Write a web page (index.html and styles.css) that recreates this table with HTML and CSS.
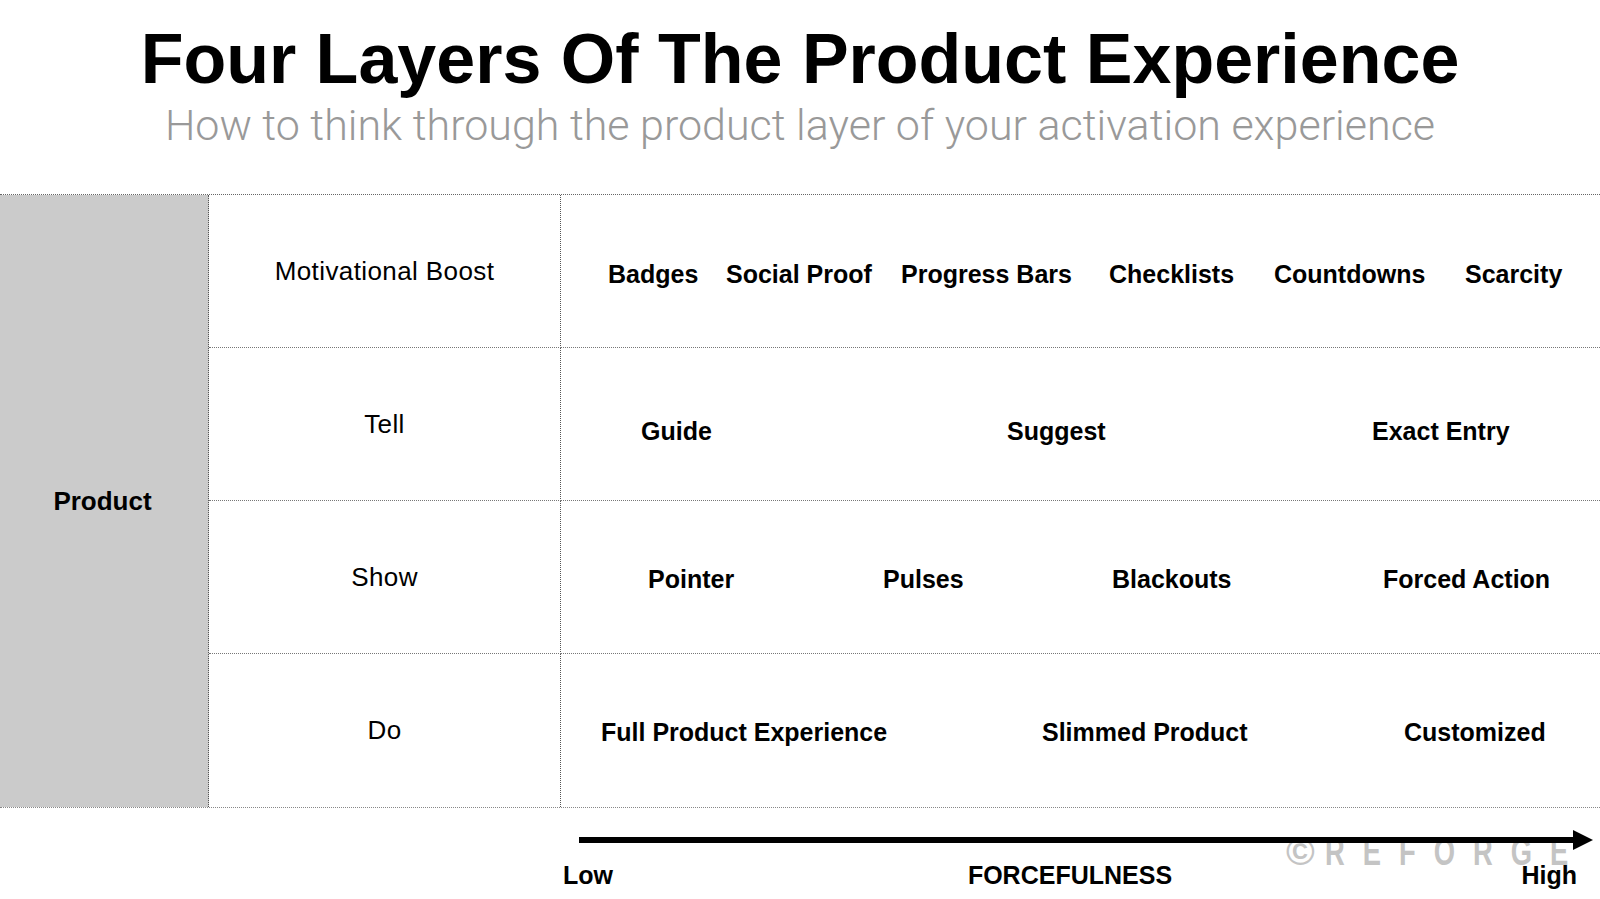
FILE: index.html
```html
<!DOCTYPE html>
<html lang="en">
<head>
<meta charset="utf-8">
<title>Four Layers Of The Product Experience</title>
<link rel="stylesheet" href="styles.css">
</head>
<body>
<header class="head">
  <h1 class="title">Four Layers Of The Product Experience</h1>
  <p class="subtitle">How to think through the product layer of your activation experience</p>
</header>

<main class="matrix">
  <div class="layer">Product</div>

  <div class="label">Motivational Boost</div>
  <div class="items items-boost">
    <span>Badges</span><span>Social Proof</span><span>Progress Bars</span><span>Checklists</span><span>Countdowns</span><span>Scarcity</span>
  </div>

  <div class="label">Tell</div>
  <div class="items items-tell">
    <span>Guide</span><span>Suggest</span><span>Exact Entry</span>
  </div>

  <div class="label">Show</div>
  <div class="items items-show">
    <span>Pointer</span><span>Pulses</span><span>Blackouts</span><span>Forced Action</span>
  </div>

  <div class="label label-last">Do</div>
  <div class="items items-do items-last">
    <span>Full Product Experience</span><span>Slimmed Product</span><span>Customized</span>
  </div>
</main>

<footer class="axis">
  <div class="watermark"><span class="copy">©</span><span class="brand">REFORGE</span></div>
  <svg class="arrow" viewBox="0 0 1014 20" width="1014" height="20" aria-hidden="true">
    <rect x="0" y="7" width="998" height="6" fill="#000"/>
    <polygon points="994,0 1014,10 994,20" fill="#000"/>
  </svg>
  <div class="scale">
    <span class="low">Low</span>
    <span class="name">FORCEFULNESS</span>
    <span class="high">High</span>
  </div>
</footer>
</body>
</html>
```

FILE: styles.css
```css
html, body {
  margin: 0;
  padding: 0;
  background: #fff;
}

body {
  width: 1600px;
  height: 899px;
  overflow: hidden;
  font-family: "Liberation Sans", Arial, Helvetica, sans-serif;
  color: #000;
}

/* ---------- header ---------- */
.head {
  height: 194px;
  box-sizing: border-box;
  padding-top: 24px;
  text-align: center;
}

.title {
  margin: 0;
  font-size: 70px;
  line-height: 70px;
  font-weight: 700;
  color: #000;
}

.subtitle {
  margin: 10px 0 0;
  font-family: Roboto, "Liberation Sans", sans-serif;
  font-weight: 300;
  font-size: 43px;
  line-height: 43px;
  color: #999;
}

/* ---------- matrix ---------- */
.matrix {
  display: grid;
  grid-template-columns: 209px 352px 1fr;
  grid-template-rows: repeat(4, 1fr);
  height: 614px;
  box-sizing: border-box;
  border-top: 1px dotted #666;
  border-bottom: 1px dotted #888;
}

.layer {
  grid-row: 1 / 5;
  background: #cbcbcb;
  border-right: 1px dotted #555;
  display: flex;
  align-items: center;
  justify-content: center;
  padding-right: 3px;
  font-size: 26px;
  font-weight: 700;
}

.label {
  display: flex;
  align-items: center;
  justify-content: center;
  border-right: 1px dotted #555;
  border-bottom: 1px dotted #777;
  font-size: 26px;
  letter-spacing: 0.4px;
}

.label-last {
  border-bottom: none;
}

.items {
  display: grid;
  grid-auto-flow: column;
  align-content: center;
  justify-content: start;
  border-bottom: 1px dotted #777;
  font-size: 25px;
  font-weight: 700;
  white-space: nowrap;
}

.items-last {
  border-bottom: none;
}

.items-boost {
  grid-template-columns: 118px 175px 208px 165px 191px auto;
  padding-left: 47px;
  padding-top: 6px;
}

.items-tell {
  grid-template-columns: 366px 365px auto;
  padding-left: 80px;
  padding-top: 14px;
}

.items-show {
  grid-template-columns: 235px 229px 271px auto;
  padding-left: 87px;
  padding-top: 4px;
}

.items-do {
  grid-template-columns: 441px 362px auto;
  padding-left: 40px;
  padding-top: 4px;
}

/* ---------- axis ---------- */
.axis {
  position: relative;
  height: 91px;
  box-sizing: border-box;
  padding-top: 22px;
}

.arrow {
  position: relative;
  z-index: 1;
  display: block;
  margin-left: 579px;
}

.scale {
  display: grid;
  grid-template-columns: 1fr auto 1fr;
  margin-top: 13px;
  padding: 0 23px 0 563px;
  font-size: 25px;
  line-height: 25px;
  font-weight: 700;
}

.low {
  justify-self: start;
}

.high {
  justify-self: end;
}

.watermark {
  position: absolute;
  left: 1286px;
  top: 24px;
  width: 290px;
  display: flex;
  align-items: baseline;
  color: #c4c4c4;
  font-weight: 700;
  white-space: nowrap;
}

.copy {
  flex: none;
  font-size: 39px;
  line-height: 39px;
  margin-right: 10px;
}

.brand {
  flex: 1 1 0;
  min-width: 0;
  font-size: 38px;
  line-height: 38px;
  letter-spacing: 25px;
  transform: scaleX(0.72);
  transform-origin: left center;
}
```
